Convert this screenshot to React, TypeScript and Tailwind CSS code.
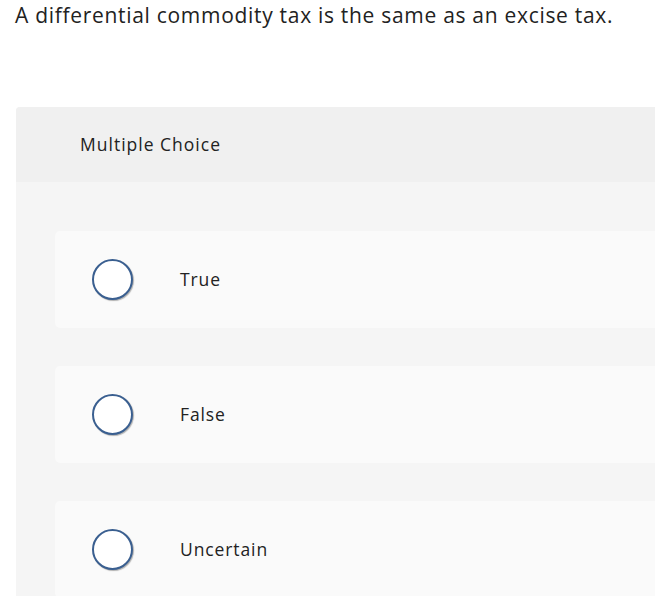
import React from "react";

const options = ["True", "False", "Uncertain"];

export default function App() {
  return (
    <div
      className="w-[655px] h-[596px] overflow-hidden bg-white text-[#1a1a1a]"
      style={{ fontFamily: "'Open Sans', 'Liberation Sans', Arial, sans-serif" }}
    >
      <div className="pl-[15px] pt-[1px] h-[107px] text-[21px] leading-[28px] tracking-[0.7px] text-[#222]">
        A differential commodity tax is the same as an excise tax.
      </div>
      <div className="ml-[16px] w-[700px] rounded-tl-[4px] bg-[#f5f5f5]">
        <div className="h-[75px] bg-[#f0f0f0] rounded-tl-[4px] flex items-center pl-[64px] text-[17.5px] tracking-[1px] text-[#222]">
          Multiple Choice
        </div>
        <div className="pt-[49px] pl-[39px] flex flex-col gap-[38px]">
          {options.map((o) => (
            <div
              key={o}
              className="h-[97px] bg-[#fafafa] rounded-l-[5px] flex items-center pl-[37px]"
            >
              <div className="w-[41px] h-[41px] rounded-full bg-white border-2 border-[#3a5f90] shadow-[1px_1px_1px_rgba(0,0,0,0.3)] shrink-0" />
              <div className="ml-[47px] text-[17.5px] tracking-[0.9px] text-[#222]">{o}</div>
            </div>
          ))}
        </div>
      </div>
    </div>
  );
}
